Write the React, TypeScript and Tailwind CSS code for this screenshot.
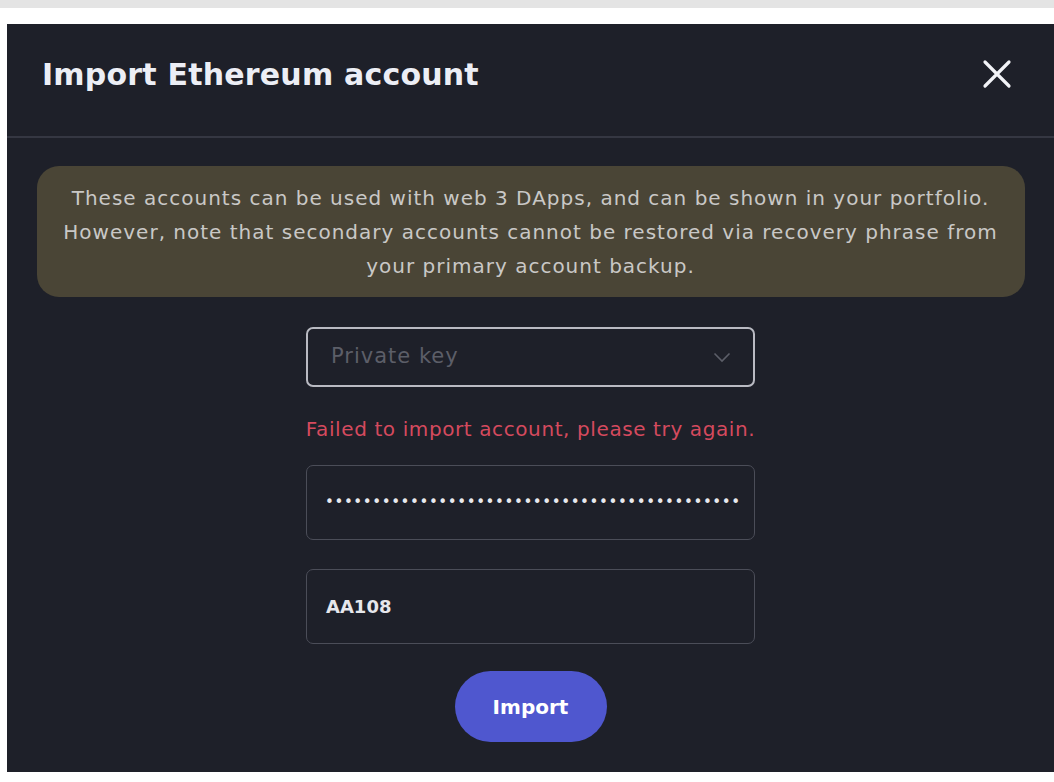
import React from "react";

export default function App() {
  const dots = "•".repeat(44);
  return (
    <div className="w-[1054px] h-[782px] bg-white flex flex-col" style={{ fontFamily: "'DejaVu Sans', sans-serif" }}>
      <div className="h-[8px] bg-[#e4e4e4] shrink-0" />
      <div className="h-[16px] shrink-0" />
      <div className="ml-[7px] h-[748px] bg-[#1e2029] flex flex-col">
        <div className="h-[112px] flex items-center justify-between pl-[35px] pr-[42px] shrink-0">
          <h1 className="text-[30px] font-bold text-[#eceef5] tracking-[0.2px] mt-[-12px]">Import Ethereum account</h1>
          <svg width="30" height="30" viewBox="0 0 30 30" className="mt-[-12px]">
            <path d="M3 3 L27 27 M27 3 L3 27" stroke="#f2f3f7" strokeWidth="3.2" strokeLinecap="round" />
          </svg>
        </div>
        <div className="h-[2px] bg-[#353742] shrink-0" />
        <div className="flex flex-col items-center pt-[28px]">
          <div className="w-[988px] h-[131px] bg-[#4a4536] rounded-[22px] flex items-center justify-center px-[10px]">
            <p className="text-center text-[20px] leading-[34px] text-[#c9c8c6] tracking-[1px] whitespace-nowrap">
              These accounts can be used with web 3 DApps, and can be shown in your portfolio.<br />
              However, note that secondary accounts cannot be restored via recovery phrase from<br />
              your primary account backup.
            </p>
          </div>
          <div className="mt-[30px] w-[449px] h-[60px] border-2 border-[#b9bac2] rounded-[7px] flex items-center justify-between pl-[23px] pr-[22px]">
            <span className="text-[21px] text-[#5c5e68] tracking-[1px]">Private key</span>
            <svg width="18" height="11" viewBox="0 0 18 11">
              <path d="M1.5 1.5 L9 9 L16.5 1.5" stroke="#5c5e68" strokeWidth="1.6" fill="none" />
            </svg>
          </div>
          <p className="mt-[28px] text-[20px] text-[#d54a5e] leading-[28px] tracking-[0.6px] whitespace-nowrap">Failed to import account, please try again.</p>
          <div className="mt-[22px] w-[449px] h-[75px] border border-[#4b4d58] rounded-[7px] flex items-center pl-[18px]">
            <span className="text-[15px] text-[#e8e9ee] tracking-[0.6px]">{dots}</span>
          </div>
          <div className="mt-[29px] w-[449px] h-[75px] border border-[#4b4d58] rounded-[7px] flex items-center pl-[19px]">
            <span className="text-[18px] font-bold text-[#e6e7ec]">AA108</span>
          </div>
          <button className="mt-[27px] w-[152px] h-[71px] rounded-full bg-[#4f57cf] text-white text-[20px] font-bold">Import</button>
        </div>
      </div>
    </div>
  );
}
